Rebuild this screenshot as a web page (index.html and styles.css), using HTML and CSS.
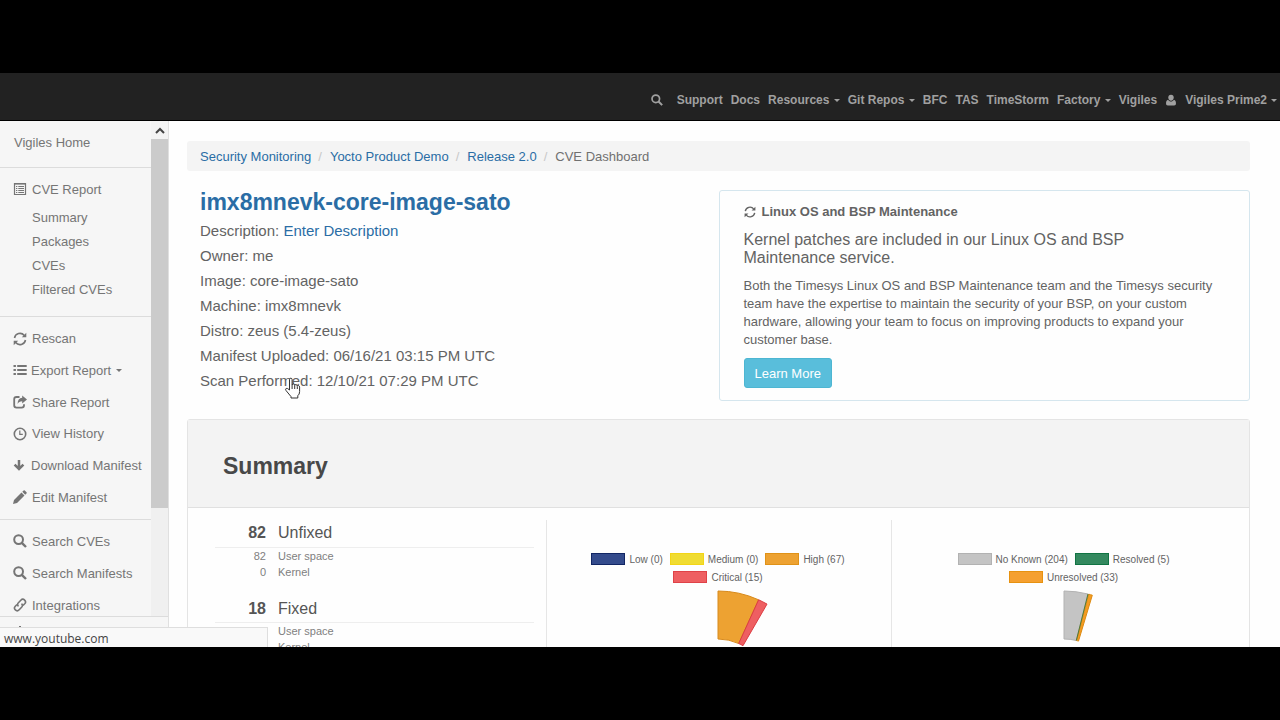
FILE: index.html
```
<!DOCTYPE html>
<html lang="en">
<head>
  <meta charset="UTF-8" />
  <title>CVE Dashboard</title>
  <meta name="viewport" content="width=device-width, initial-scale=1.0"/>
  <link rel="stylesheet" href="styles.css">
</head>
<body>
  <svg class="defs" width="0" height="0">
    <symbol id="i-search" viewBox="0 0 14 14"><circle cx="5.6" cy="5.6" r="4.4" fill="none" stroke="currentColor" stroke-width="2"/><path d="M8.8 8.8L13 13" stroke="currentColor" stroke-width="2.4"/></symbol>
    <symbol id="i-user" viewBox="0 0 14 14"><path d="M7 .8a3.2 3.4 0 0 1 3.2 3.4C10.200 6.300 8.800 7.900 7 7.900S3.800 6.300 3.800 4.200A3.200 3.400 0 0 1 7 .8zM3.600 6.700C4.500 8 5.600 8.800 7 8.800s2.500-.8 3.400-2.100c1.700.4 2.400 2 2.400 4.300 0 1.500-.8 2.300-2.100 2.300H3.300c-1.300 0-2.100-.8-2.100-2.300 0-2.300.7-3.900 2.400-4.300z" fill="currentColor"/></symbol>
    <symbol id="i-refresh" viewBox="0 0 14 14"><path d="M1.500 6A5.600 5.600 0 0 1 11.300 3.400M12.500 8A5.600 5.600 0 0 1 2.700 10.600" fill="none" stroke="currentColor" stroke-width="1.600"/><path d="M13.300.8v4.500H8.800zM.7 13.200V8.700h4.500z" fill="currentColor"/></symbol>
    <symbol id="i-report" viewBox="0 0 14 14"><path d="M1.500 1.500h11v11h-11z" fill="none" stroke="currentColor" stroke-width="1.200"/><path d="M1 1.800h12" stroke="currentColor" stroke-width="1.600"/><path d="M3 4.500h1.300M5.300 4.500H11M3 6.500h1.300M5.300 6.500H11M3 8.500h1.300M5.300 8.500H11M3 10.500h1.300M5.300 10.500H11" stroke="currentColor" stroke-width="1"/></symbol>
    <symbol id="i-list" viewBox="0 0 14 14"><path d="M.5 3h2.400M4.200 3h9.500M.5 7h2.400M4.200 7h9.500M.5 11h2.400M4.200 11h9.500" stroke="currentColor" stroke-width="1.900"/></symbol>
    <symbol id="i-share" viewBox="0 0 14 14"><path d="M6.500 2H3.500Q1.200 2 1.200 4.300v6Q1.200 12.600 3.500 12.600h5.200q2.300 0 2.300-2.300V9.300" fill="none" stroke="currentColor" stroke-width="1.800"/><path d="M9.200.6L14 4.600 9.200 8.500V6.200C6.800 6.200 5.600 7 4.600 9c0-3.800 1.600-6 4.600-6.200z" fill="currentColor"/></symbol>
    <symbol id="i-clock" viewBox="0 0 14 14"><circle cx="7" cy="7" r="5.700" fill="none" stroke="currentColor" stroke-width="1.600"/><path d="M6.800 3.500V7.400H9.800" fill="none" stroke="currentColor" stroke-width="1.200"/></symbol>
    <symbol id="i-down" viewBox="0 0 14 14"><path d="M6 2v9M1.600 6.600L6 11l4.400-4.400" fill="none" stroke="currentColor" stroke-width="2.500"/></symbol>
    <symbol id="i-pencil" viewBox="0 0 14 14"><path d="M0 14l1-3.900 7.500-7.500 3 3L4 13zM9.300 1.800l1.300-1.300q.6-.6 1.200 0l1.700 1.700q.6.600 0 1.200l-1.300 1.300z" fill="currentColor"/></symbol>
    <symbol id="i-link" viewBox="0 0 14 14"><g fill="none" stroke="currentColor" stroke-width="1.600"><path d="M5.500 8.400C4.200 7.200 4.400 5.700 5.400 4.700l2.400-2.500c2.600-2.600 6.300 1 3.900 3.600L10 7.500"/><path d="M8.500 5.600c1.300 1.200 1.100 2.700.1 3.700l-2.400 2.500c-2.600 2.600-6.300-1-3.900-3.600L4 6.500"/></g></symbol>
    <symbol id="i-cog" viewBox="0 0 14 14"><circle cx="7" cy="7" r="4" fill="none" stroke="currentColor" stroke-width="3"/><path d="M7 0v14M0 7h14" stroke="currentColor" stroke-width="2"/></symbol>
  </svg>

  <div class="screen">
    <nav class="topnav">
      <a href="#" aria-label="Search"><svg class="icon search"><use href="#i-search"/></svg></a>
      <a href="#">Support</a>
      <a href="#">Docs</a>
      <a href="#">Resources <i class="caret"></i></a>
      <a href="#">Git Repos <i class="caret"></i></a>
      <a href="#">BFC</a>
      <a href="#">TAS</a>
      <a href="#">TimeStorm</a>
      <a href="#">Factory <i class="caret"></i></a>
      <a href="#">Vigiles</a>
      <a href="#" class="user"><svg class="icon"><use href="#i-user"/></svg>Vigiles Prime2 <i class="caret"></i></a>
    </nav>

    <div class="layout">
      <aside class="sidebar">
        <div class="side-scroll">
          <div class="side-menu">
            <div class="group home"><a href="#">Vigiles Home</a></div>
            <div class="group report">
              <a href="#"><svg class="icon"><use href="#i-report"/></svg>CVE Report</a>
              <ul class="sub">
                <li><a href="#">Summary</a></li>
                <li><a href="#">Packages</a></li>
                <li><a href="#">CVEs</a></li>
                <li><a href="#">Filtered CVEs</a></li>
              </ul>
            </div>
            <div class="group actions">
              <a href="#"><svg class="icon"><use href="#i-refresh"/></svg>Rescan</a>
              <a href="#" class="tight"><svg class="icon"><use href="#i-list"/></svg>Export Report <i class="caret"></i></a>
              <a href="#"><svg class="icon"><use href="#i-share"/></svg>Share Report</a>
              <a href="#"><svg class="icon"><use href="#i-clock"/></svg>View History</a>
              <a href="#" class="tight"><svg class="icon"><use href="#i-down"/></svg>Download Manifest</a>
              <a href="#"><svg class="icon"><use href="#i-pencil"/></svg>Edit Manifest</a>
            </div>
            <div class="group tools">
              <a href="#"><svg class="icon"><use href="#i-search"/></svg>Search CVEs</a>
              <a href="#"><svg class="icon"><use href="#i-search"/></svg>Search Manifests</a>
              <a href="#"><svg class="icon"><use href="#i-link"/></svg>Integrations</a>
            </div>
          </div>
          <div class="scrollbar">
            <button class="scroll-up" aria-label="Scroll up"><svg width="10" height="7" viewBox="0 0 10 7"><path d="M1 6l4-4 4 4" fill="none" stroke="#444" stroke-width="2"/></svg></button>
            <div class="thumb"></div>
          </div>
        </div>
        <div class="side-foot"><svg class="icon"><use href="#i-cog"/></svg></div>
      </aside>

      <main class="content">
        <ol class="breadcrumb">
          <li><a href="#">Security Monitoring</a></li>
          <li><a href="#">Yocto Product Demo</a></li>
          <li><a href="#">Release 2.0</a></li>
          <li>CVE Dashboard</li>
        </ol>

        <div class="intro">
          <section class="details">
            <h1><a href="#">imx8mnevk-core-image-sato</a></h1>
            <p>Description: <a href="#">Enter Description</a></p>
            <p>Owner: me</p>
            <p>Image: core-image-sato</p>
            <p>Machine: imx8mnevk</p>
            <p>Distro: zeus (5.4-zeus)</p>
            <p>Manifest Uploaded: 06/16/21 03:15 PM UTC</p>
            <p>Scan Performed: 12/10/21 07:29 PM UTC</p>
          </section>
          <section class="promo">
            <h3><svg class="icon"><use href="#i-refresh"/></svg>Linux OS and BSP Maintenance</h3>
            <h4>Kernel patches are included in our Linux OS and BSP Maintenance service.</h4>
            <p>Both the Timesys Linux OS and BSP Maintenance team and the Timesys security team have the expertise to maintain the security of your BSP, on your custom hardware, allowing your team to focus on improving products to expand your customer base.</p>
            <button class="btn">Learn More</button>
          </section>
        </div>

        <section class="panel">
          <h2>Summary</h2>
          <div class="panel-body">
            <div class="counts">
              <table>
                <tr class="total"><th>82</th><td>Unfixed</td></tr>
                <tr><td>82</td><td>User space</td></tr>
                <tr><td>0</td><td>Kernel</td></tr>
              </table>
              <table>
                <tr class="total"><th>18</th><td>Fixed</td></tr>
                <tr><td></td><td>User space</td></tr>
                <tr><td></td><td>Kernel</td></tr>
              </table>
            </div>
            <div class="chart">
              <ul class="legend">
                <li><i class="low"></i>Low (0)</li>
                <li><i class="medium"></i>Medium (0)</li>
                <li><i class="high"></i>High (67)</li>
                <li><i class="critical"></i>Critical (15)</li>
              </ul>
              <svg width="200" height="200" viewBox="0 0 200 200">
                <path d="M100 2A98 98 0 0 1 140.600 10.800L120.700 54.500A50 50 0 0 0 100 50z" fill="#eda232" stroke="#d88a1c"/>
                <path d="M140.600 10.800A98 98 0 0 1 149 15.100L125 56.700A50 50 0 0 0 120.700 54.500z" fill="#ee5f62" stroke="#dc3c42"/>
              </svg>
            </div>
            <div class="chart">
              <ul class="legend">
                <li><i class="unknown"></i>No Known (204)</li>
                <li><i class="resolved"></i>Resolved (5)</li>
                <li><i class="unresolved"></i>Unresolved (33)</li>
              </ul>
              <svg width="200" height="200" viewBox="0 0 200 200">
                <path d="M100 2A98 98 0 0 1 124 5L112.300 51.500A50 50 0 0 0 100 50z" fill="#c4c4c4" stroke="#b2b2b2"/>
                <path d="M124.700 5.200A98 98 0 0 1 128.300 6.200L114.500 52.100A50 50 0 0 0 112.600 51.600z" fill="#f49c22" stroke="#dd8a10"/>
                <path d="M124 5L112.300 51.500" stroke="#4f7a3a"/>
              </svg>
            </div>
          </div>
        </section>
      </main>
    </div>

    <div class="status">www.youtube.com</div>
    <svg class="cursor" width="18" height="22" viewBox="0 0 18 22"><path d="M5.500 13V2.600q0-1.400 1.300-1.400t1.300 1.400V8q.2-1.200 1.400-1t1.200 1.400q.3-1 1.400-.8t1.200 1.500q.3-.8 1.300-.5t1 1.500v4.400q0 3-1.800 4.200V21H7v-1.400L2 13.500q-1-1.600.2-2.100t3.300 1.600z" fill="#fff" stroke="#333" stroke-width="1"/><path d="M8.100 8v4M10.700 8.500V12M13.300 9.300V12" stroke="#333"/></svg>
  </div>
</body>
</html>
```
FILE: styles.css
```
* {
  box-sizing: border-box;
}
body {
  margin: 0;
  background: #000;
  font-family: "Liberation Sans", Arial, sans-serif;
  font-size: 13px;
  color: #636363;
}
a {
  color: #2a6da5;
  text-decoration: none;
}
h1, h2, h3, h4, p, ul, ol {
  margin: 0;
  padding: 0;
}
ul, ol {
  list-style: none;
}
.defs {
  display: block;
}
.icon {
  width: 14px;
  height: 14px;
  flex: none;
}
.caret {
  display: inline-block;
  margin-left: 1px;
  border: 3px solid transparent;
  border-top-color: currentColor;
  border-bottom: 0;
  vertical-align: middle;
}
.screen {
  position: relative;
  display: flex;
  flex-direction: column;
  height: calc(100vh - 146px);
  margin: 73px 0;
  background: #fefefe;
  overflow: hidden;
}

/* top bar */
.topnav {
  display: flex;
  flex: none;
  justify-content: flex-end;
  align-items: center;
  gap: 8px;
  height: 48px;
  padding: 7px 3px 0 0;
  background: #222;
  border-bottom: 1px solid #000;
}
.topnav a {
  font-size: 12px;
  font-weight: bold;
  color: #a0a0a0;
  white-space: nowrap;
}
.topnav .icon {
  display: block;
  width: 12px;
  height: 12px;
}
.topnav .search {
  margin-right: 6px;
}
.topnav .user {
  display: flex;
  align-items: center;
  gap: 8px;
}
.topnav .user .caret {
  margin-left: -4px;
}

.layout {
  display: flex;
  flex: 1;
  min-height: 0;
}

/* sidebar */
.sidebar {
  display: flex;
  flex-direction: column;
  flex: none;
  width: 169px;
  background: #f6f6f6;
  border-right: 1px solid #e0e0e0;
}
.side-scroll {
  display: flex;
  flex: 1;
  min-height: 0;
}
.side-menu {
  flex: 1;
  overflow: hidden;
}
.side-menu a {
  display: flex;
  align-items: center;
  gap: 5px;
  height: 32px;
  padding-left: 13px;
  color: #757575;
  white-space: nowrap;
}
.side-menu .tight {
  gap: 4px;
}
.group {
  border-bottom: 1px solid #dcdcdc;
}
.home {
  padding: 5px 0 9px 1px;
}
.report {
  padding: 5px 0 15px;
}
.report .sub a {
  height: 24px;
  padding-left: 32px;
}
.actions {
  display: grid;
  grid-template-rows: repeat(6, 1fr);
  height: 203px;
  padding: 6px 0;
}
.actions a {
  height: auto;
}
.tools {
  padding-top: 5px;
}
.scrollbar {
  width: 17px;
  background: #f0f0f0;
}
.scroll-up {
  display: flex;
  justify-content: center;
  align-items: center;
  width: 100%;
  height: 18px;
  padding: 0;
  border: 0;
  background: #f3f3f3;
}
.thumb {
  height: 75%;
  max-height: 369px;
  background: #cbcbcb;
}
.side-foot {
  flex: none;
  height: 31px;
  padding: 9px 13px;
  border-top: 1px solid #dcdcdc;
  color: #757575;
}

/* main column */
.content {
  flex: 1;
  min-width: 0;
  padding: 20px 30px 0 18px;
}
.breadcrumb {
  display: flex;
  padding: 1px 13px 0;
  line-height: 29px;
  background: #f4f4f4;
  border-radius: 3px;
  color: #707070;
}
.breadcrumb li + li::before {
  content: "/";
  padding: 0 8px 0 7px;
  color: #c8c8c8;
}
.intro {
  display: grid;
  grid-template-columns: 1fr 1fr;
  margin-top: 19px;
}
.details {
  padding-left: 13px;
  font-size: 15px;
  line-height: 25px;
}
.details h1 {
  margin-bottom: 4px;
  font-size: 23px;
  line-height: 24px;
}
.promo {
  padding: 12px 32px 12px 24px;
  border: 1px solid #d5e6ee;
  border-radius: 3px;
  line-height: 18px;
}
.promo h3 {
  display: flex;
  align-items: center;
  gap: 6px;
  font-size: 13px;
}
.promo h3 .icon {
  width: 12px;
  height: 12px;
}
.promo h4 {
  margin: 10px 0;
  font-size: 16px;
  font-weight: normal;
}
.btn {
  display: block;
  height: 30px;
  margin-top: 9px;
  padding: 0 10px;
  border: 1px solid #4db6d2;
  border-radius: 3px;
  background: #59bedb;
  color: #fff;
  font: 13px "Liberation Sans", Arial, sans-serif;
}

/* summary panel */
.panel {
  margin-top: 18px;
  border: 1px solid #e4e4e4;
  border-radius: 3px;
}
.panel h2 {
  padding: 34px 35px 29px;
  border-bottom: 1px solid #e0e0e0;
  background: #f3f3f3;
  color: #484848;
  font-size: 23px;
  line-height: 24px;
}
.panel-body {
  display: grid;
  grid-template-columns: 358fr 345fr 358fr;
  padding-top: 12px;
}
.counts {
  padding: 0 12px 0 27px;
}
.counts table {
  width: 100%;
  margin-bottom: 16px;
  border-collapse: collapse;
  font-size: 11px;
  line-height: 16px;
  color: #808080;
}
.counts td, .counts th {
  height: 16px;
  padding: 0 0 0 12px;
  text-align: left;
}
.counts td:first-child, .counts th {
  width: 51px;
  padding: 0;
  text-align: right;
}
.counts .total {
  font-size: 16px;
  color: #555;
}
.counts .total th, .counts .total td {
  height: 27px;
  border-bottom: 1px solid #eee;
}
.chart {
  display: flex;
  flex-direction: column;
  align-items: center;
  padding: 33px 2px 0 0;
  border-left: 1px solid #e6e6e6;
}
.chart:last-child {
  padding-right: 14px;
}
.legend {
  display: flex;
  flex-wrap: wrap;
  justify-content: center;
  gap: 6px 7px;
  max-width: 264px;
  margin-bottom: 6px;
  font-size: 10px;
  line-height: 13px;
}
.legend li {
  display: flex;
  align-items: center;
  gap: 4px;
  height: 12px;
}
.legend i {
  width: 34px;
  height: 12px;
  border-width: 1px;
  border-style: solid;
}
.low { background: #344b8c; border-color: #122664; }
.medium { background: #f0dc32; border-color: #f3d516; }
.high { background: #eda232; border-color: #e09218; }
.critical { background: #ee5f62; border-color: #df4248; }
.unknown { background: #c4c4c4; border-color: #b2b2b2; }
.resolved { background: #34895f; border-color: #117443; }
.unresolved { background: #f5a030; border-color: #e79210; }

/* overlays */
.status {
  position: absolute;
  left: 0;
  bottom: 0;
  width: 268px;
  height: 20px;
  padding-left: 4px;
  border: 1px solid #dedede;
  border-width: 1px 1px 0 0;
  background: #f9f9f9;
  color: #444;
  font: 12px/22px "Open Sans", "Noto Sans", sans-serif;
}
.cursor {
  position: absolute;
  left: 284px;
  top: 304px;
}
```
